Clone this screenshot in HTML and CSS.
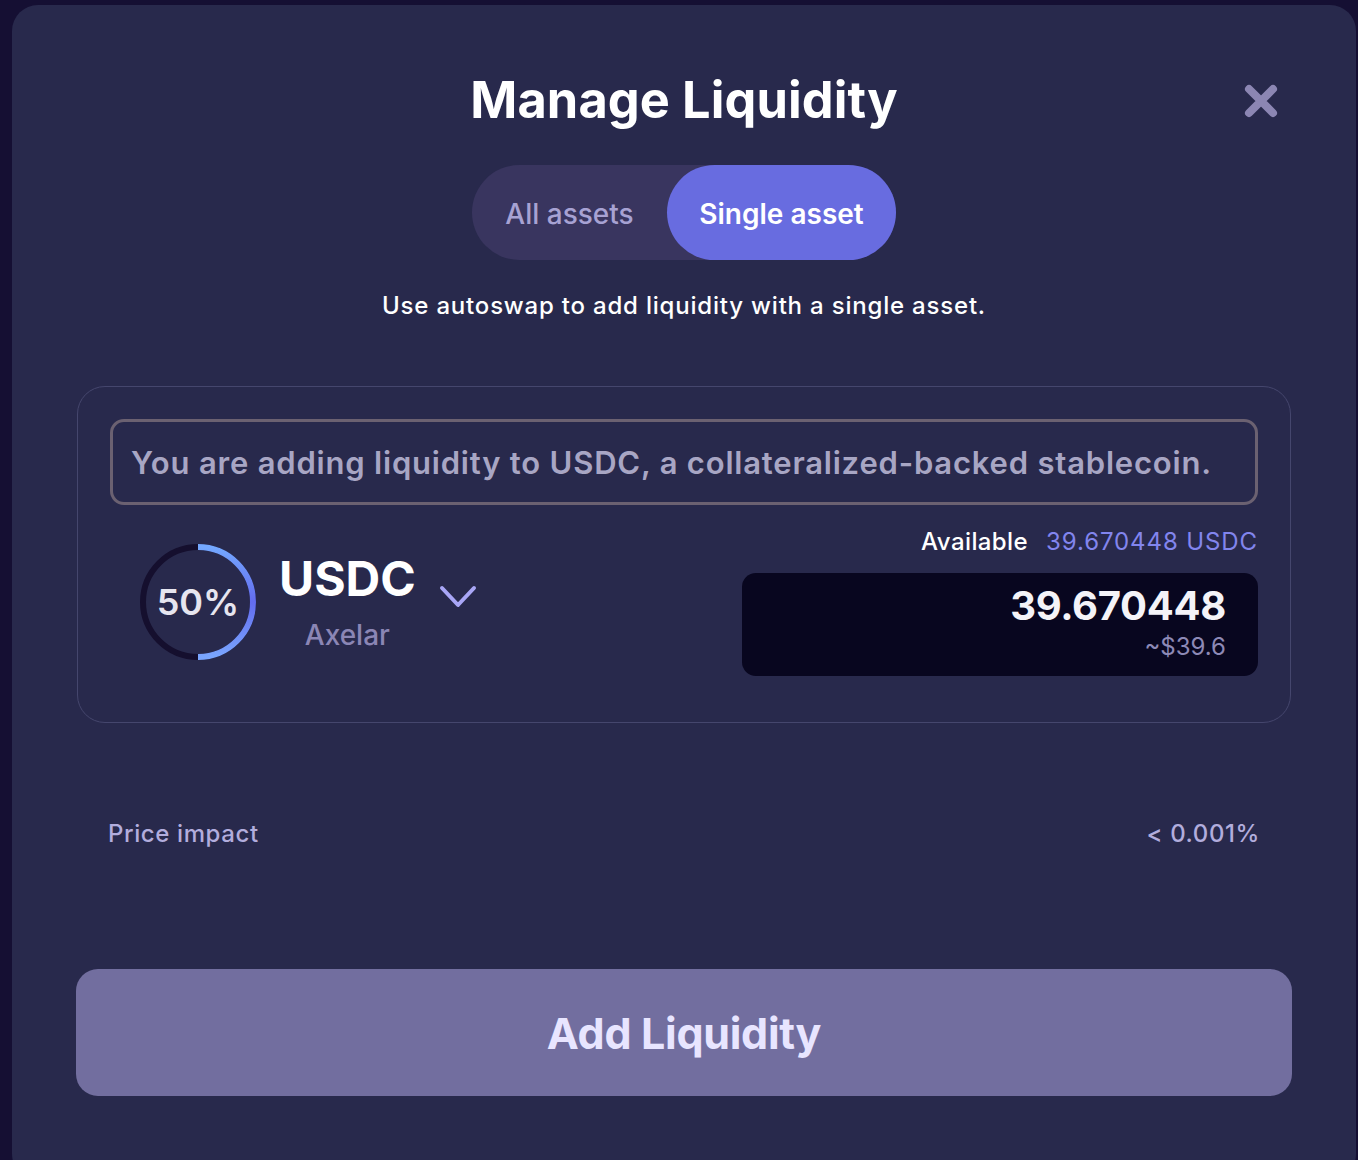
FILE: index.html
```html
<!DOCTYPE html>
<html>
<head>
<meta charset="utf-8">
<link rel="stylesheet" href="styles.css">
</head>
<body>
<div class="backdrop">
  <div class="modal">
    <div class="header">
      <h1 class="title">Manage Liquidity</h1>
      <button class="close" aria-label="Close">
        <svg width="34" height="34" viewBox="0 0 34 34"><path d="M5 5 L29 29 M29 5 L5 29" stroke="#8c86b3" stroke-width="8" stroke-linecap="round"/></svg>
      </button>
    </div>
    <div class="toggle">
      <div class="tab">All assets</div>
      <div class="tab active">Single asset</div>
    </div>
    <p class="subtitle">Use autoswap to add liquidity with a single asset.</p>
    <div class="card">
      <div class="notice">You are adding liquidity to USDC, a collateralized-backed stablecoin.</div>
      <div class="asset-row">
        <div class="token">
          <div class="ring">
            <svg width="120" height="120" viewBox="0 0 120 120">
              <defs>
                <linearGradient id="g" x1="0" y1="0" x2="0" y2="1">
                  <stop offset="0" stop-color="#74a8ff"/>
                  <stop offset="0.5" stop-color="#636cee"/>
                  <stop offset="1" stop-color="#7aa6ff"/>
                </linearGradient>
              </defs>
              <circle cx="60" cy="60" r="55" fill="none" stroke="#150f2e" stroke-width="6"/>
              <path d="M60 5 A55 55 0 0 1 60 115" fill="none" stroke="url(#g)" stroke-width="6"/>
            </svg>
            <span class="pct">50%</span>
          </div>
          <div class="token-name">
            <div class="symbol">USDC</div>
            <div class="chain">Axelar</div>
          </div>
          <svg class="chevron" width="40" height="26" viewBox="0 0 40 26"><path d="M4 4 L20 21 L36 4" fill="none" stroke="#a9a6f6" stroke-width="4" stroke-linecap="round" stroke-linejoin="round"/></svg>
        </div>
        <div class="amount">
          <div class="available"><span class="avail-label">Available</span><span class="avail-value">39.670448 USDC</span></div>
          <div class="input">
            <div class="value">39.670448</div>
            <div class="fiat">~$39.6</div>
          </div>
        </div>
      </div>
    </div>
    <div class="impact">
      <span>Price impact</span>
      <span>&lt; 0.001%</span>
    </div>
    <button class="submit">Add Liquidity</button>
  </div>
</div>
</body>
</html>
```
FILE: styles.css
```css
* { box-sizing: border-box; }
html, body {
  margin: 0;
  padding: 0;
  background: #150f33;
  font-family: "Inter", "Liberation Sans", sans-serif;
  overflow: hidden;
}
.backdrop {
  height: 1160px;
  padding: 5px 2px 0 12px;
}
.modal {
  width: 1344px;
  height: 1175px;
  background: #28294c;
  border-radius: 26px;
  padding: 65px 64px 0;
}
.header {
  position: relative;
  display: flex;
  justify-content: center;
}
.title {
  margin: 0;
  font-family: "Inter", sans-serif;
  font-weight: 700;
  font-size: 50.5px;
  line-height: 60px;
  color: #ffffff;
  letter-spacing: 0.1px;
}
.close {
  position: absolute;
  right: 14px;
  top: 14px;
  background: none;
  border: 0;
  padding: 0;
  width: 34px;
  height: 34px;
  cursor: pointer;
}
.toggle {
  margin: 35px auto 0;
  width: 424px;
  height: 95px;
  border-radius: 48px;
  background: #39355f;
  display: flex;
  justify-content: space-between;
}
.tab {
  display: flex;
  align-items: center;
  justify-content: center;
  font-size: 28px;
  font-weight: 500;
  color: #a7a2d3;
  width: 195px;
  padding-top: 2px;
}
.tab.active {
  width: 229px;
  background: #686ce0;
  border-radius: 48px;
  color: #ffffff;
  font-weight: 600;
}
.subtitle {
  margin: 31px 0 0;
  text-align: center;
  font-size: 24px;
  line-height: 30px;
  font-weight: 500;
  color: #ffffff;
  letter-spacing: 0.8px;
}
.card {
  margin-top: 65px;
  margin-left: 1px;
  width: 1214px;
  height: 337px;
  border: 1.5px solid #45466d;
  border-radius: 28px;
  padding: 32px 32px 0;
}
.notice {
  height: 86px;
  border: 3px solid #6b6171;
  border-radius: 14px;
  display: flex;
  align-items: center;
  padding-left: 18px;
  font-size: 31px;
  font-weight: 600;
  color: #a8a6c4;
  letter-spacing: 0.8px;
}
.asset-row {
  margin-top: 23px;
  display: flex;
  justify-content: space-between;
  align-items: center;
}
.token {
  display: flex;
  align-items: center;
  padding-left: 28px;
}
.ring {
  position: relative;
  width: 120px;
  height: 120px;
}
.ring svg { display: block; }
.pct {
  position: absolute;
  inset: 0;
  display: flex;
  align-items: center;
  justify-content: center;
  font-size: 36px;
  font-weight: 600;
  color: #e6e5ef;
}
.token-name {
  margin-left: 21px;
  display: flex;
  flex-direction: column;
  align-items: center;
  margin-top: -1px;
}
.symbol {
  font-size: 48px;
  line-height: 54px;
  font-weight: 700;
  color: #ffffff;
}
.chain {
  margin-top: 13px;
  font-size: 28px;
  line-height: 32px;
  font-weight: 500;
  color: #8b86b5;
}
.chevron {
  margin-left: 22px;
  margin-top: -10px;
}
.amount {
  width: 516px;
  display: flex;
  flex-direction: column;
  align-items: flex-end;
}
.available {
  font-size: 24px;
  line-height: 28px;
  font-weight: 500;
  letter-spacing: 0.4px;
}
.avail-label { color: #ffffff; margin-right: 18px; }
.avail-value { color: #8285ee; font-weight: 400; letter-spacing: 0.9px; }
.input {
  margin-top: 17px;
  width: 516px;
  height: 103px;
  background: #08061f;
  border-radius: 14px;
  padding: 8px 32px 0 0;
  display: flex;
  flex-direction: column;
  align-items: flex-end;
}
.value {
  font-size: 40px;
  line-height: 50px;
  font-weight: 700;
  color: #f4f3f8;
  letter-spacing: -0.3px;
}
.fiat {
  font-size: 24px;
  line-height: 32px;
  color: #8d89b6;
}
.impact {
  margin-top: 96px;
  padding: 0 32px 0 32px;
  display: flex;
  justify-content: space-between;
  font-size: 24px;
  line-height: 30px;
  font-weight: 500;
  color: #b2addd;
  letter-spacing: 0.6px;
}
.submit {
  display: block;
  margin-top: 120px;
  width: 1216px;
  height: 127px;
  border: 0;
  border-radius: 22px;
  background: #726e9f;
  font-family: "Inter", sans-serif;
  font-size: 43px;
  font-weight: 700;
  color: #e8e5ff;
  letter-spacing: -0.3px;
}
```
